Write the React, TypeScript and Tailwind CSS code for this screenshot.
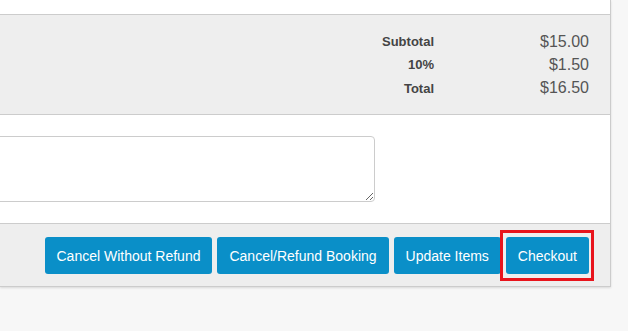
import React from "react";

export default function App() {
  const rows = [
    ["Subtotal", "$15.00"],
    ["10%", "$1.50"],
    ["Total", "$16.50"],
  ];
  const btn =
    "h-[37px] px-3 rounded-[3px] bg-[#0a8fc8] text-white text-[14px] leading-[20px] whitespace-nowrap";
  return (
    <div className="w-[628px] h-[331px] bg-[#f7f7f7] overflow-hidden" style={{ fontFamily: '"Liberation Sans", Arial, sans-serif' }}>
      <div className="w-[611px] bg-white border-r border-[#cccccc] shadow-[0_1px_2px_rgba(0,0,0,0.12)]">
        <div className="h-[14px]" />
        <div className="bg-[#eeeeee] border-y border-[#cccccc] pt-[15px] pb-[14px] pr-[21px]">
          {rows.map(([l, v]) => (
            <div key={l} className="flex justify-end items-center h-[23.4px]">
              <div className="w-[120px] text-right font-bold text-[13px] text-[#444444]">{l}</div>
              <div className="w-[155px] text-right text-[16px] text-[#555555]">{v}</div>
            </div>
          ))}
        </div>
        <div className="pt-[21px] pb-[21px]">
          <textarea className="block -ml-[20px] w-[395px] h-[66px] border border-[#cccccc] rounded-[4px] bg-white" />
        </div>
        <div className="bg-[#eeeeee] border-y border-[#cccccc] pt-[13px] pb-[12px] pr-[21px] flex justify-end gap-[5px]">
          <button className={btn}>Cancel Without Refund</button>
          <button className={btn}>Cancel/Refund Booking</button>
          <button className={btn}>Update Items</button>
          <div className="relative">
            <button className={btn}>Checkout</button>
            <div className="absolute -left-[6px] -right-[5px] -top-[7px] -bottom-[7px] border-[3px] border-[#e8141c] pointer-events-none" />
          </div>
        </div>
      </div>
    </div>
  );
}
